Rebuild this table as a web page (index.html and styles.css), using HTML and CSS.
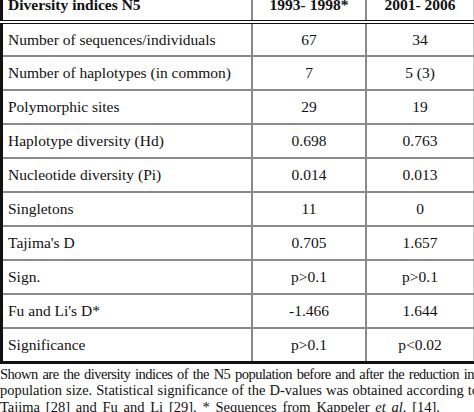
FILE: index.html
```html
<!DOCTYPE html>
<html>
<head>
<meta charset="utf-8">
<link rel="stylesheet" href="styles.css">
</head>
<body>
<div class="page">
  <table class="data">
    <thead>
      <tr class="head">
        <th class="label">Diversity indices N5</th>
        <th>1993- 1998*</th>
        <th>2001- 2006</th>
      </tr>
    </thead>
    <tbody>
      <tr><td class="label">Number of sequences/individuals</td><td>67</td><td>34</td></tr>
      <tr><td class="label">Number of haplotypes (in common)</td><td>7</td><td>5 (3)</td></tr>
      <tr><td class="label">Polymorphic sites</td><td>29</td><td>19</td></tr>
      <tr><td class="label">Haplotype diversity (Hd)</td><td>0.698</td><td>0.763</td></tr>
      <tr><td class="label">Nucleotide diversity (Pi)</td><td>0.014</td><td>0.013</td></tr>
      <tr><td class="label">Singletons</td><td>11</td><td>0</td></tr>
      <tr><td class="label">Tajima's D</td><td>0.705</td><td>1.657</td></tr>
      <tr><td class="label">Sign.</td><td>p&gt;0.1</td><td>p&gt;0.1</td></tr>
      <tr><td class="label">Fu and Li's D*</td><td>-1.466</td><td>1.644</td></tr>
      <tr class="last"><td class="label">Significance</td><td>p&gt;0.1</td><td>p&lt;0.02</td></tr>
    </tbody>
  </table>
  <div class="caption">
    <div class="line first">Shown are the diversity indices of the N5 population before and after the reduction in</div>
    <div class="line">population size. Statistical significance of the D-values was obtained according to</div>
    <div class="line end">Tajima [28] and Fu and Li [29]. * Sequences from Kappeler <i>et al</i>. [14].</div>
  </div>
</div>
</body>
</html>
```
FILE: styles.css
```css
html, body {
  margin: 0;
  padding: 0;
  background: #ffffff;
}
body {
  width: 474px;
  height: 412px;
  overflow: hidden;
  font-family: "Liberation Serif", "Times New Roman", serif;
  color: #111111;
}
.page {
  width: 474px;
  margin-top: -11px;
}
.data {
  border-collapse: collapse;
  table-layout: fixed;
  width: 474px;
  font-size: 15.5px;
  border-left: 3px solid #111111;
}
.data th, .data td {
  padding: 0;
  text-align: center;
  border-right: 2px solid #8a8a8a;
  font-weight: normal;
}
.data th:nth-child(1), .data td:nth-child(1) { width: 243px; }
.data th:nth-child(2), .data td:nth-child(2) { width: 112px; }
.data th:last-child, .data td:last-child { border-right: 1px solid #cccccc; }
.data .label {
  text-align: left;
  padding-left: 5px;
}
.head th {
  font-weight: bold;
  height: 31px;
  vertical-align: middle;
  border-bottom: 4px double #111111;
}
tbody tr {
  height: 34px;
}
tbody td {
  border-bottom: 2px solid #8a8a8a;
}
tbody tr.last td {
  border-bottom: 3px solid #111111;
}
.caption {
  margin-top: 2px;
  font-size: 14.5px;
  line-height: 16.5px;
}
.caption .line {
  width: 479px;
  text-align: justify;
  text-align-last: justify;
  white-space: nowrap;
}
.caption .line.first {
  width: 474px;
  letter-spacing: -0.5px;
}
.caption .line.end {
  width: 440px;
}
```
